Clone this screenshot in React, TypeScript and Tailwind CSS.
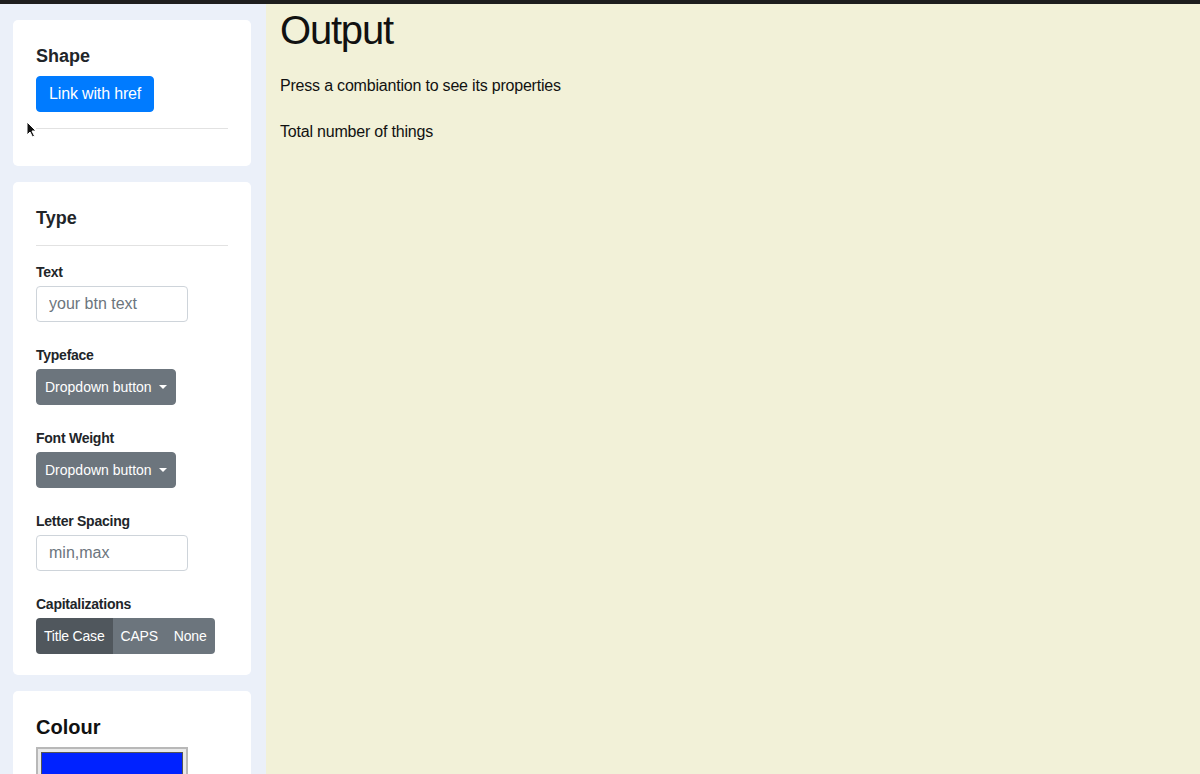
import React from "react";

const font = { fontFamily: '"Liberation Sans", Arial, sans-serif' };

const Label: React.FC<{ children: React.ReactNode }> = ({ children }) => (
  <div className="text-[14px] font-bold leading-[21px] tracking-[-0.25px] text-[#212529] mb-[3px]">{children}</div>
);

const TextBox: React.FC<{ placeholder: string }> = ({ placeholder }) => (
  <input
    className="block w-[152px] h-[36px] px-3 rounded border border-[#ced4da] bg-white text-[16px] text-[#495057] placeholder:text-[#6c757d] outline-none"
    placeholder={placeholder}
  />
);

const Dropdown: React.FC = () => (
  <button className="flex items-center h-[36px] px-2 rounded bg-[#6c757d] border border-[#6c757d] text-white text-[14px]">
    Dropdown button
    <span className="ml-[7px] inline-block w-0 h-0 border-l-[4px] border-r-[4px] border-t-[4px] border-l-transparent border-r-transparent border-t-white" />
  </button>
);

const App: React.FC = () => {
  return (
    <div className="h-screen w-full overflow-hidden flex flex-col" style={font}>
      <div className="h-[4px] bg-[#1e1e1e] shrink-0" />
      <div className="flex flex-1 min-h-0">
        {/* sidebar */}
        <aside className="relative w-[266px] shrink-0 bg-[#ebf0f9] pl-[13px] pr-[15px] pt-4 flex flex-col gap-4">
          <section className="bg-white rounded-[5px] px-[23px] pt-6 pb-[23px]">
            <h2 className="text-[18px] font-bold leading-6 text-[#212529] mb-2">Shape</h2>
            <button className="h-[36px] px-3 rounded bg-[#007bff] border border-[#007bff] text-white text-[16px] tracking-[-0.15px]">
              Link with href
            </button>
            <hr className="mt-4 mb-[14px] border-0 border-t border-[#e2e2e2] w-full" />
            <svg
              className="absolute left-[26px] top-[117px]"
              width="11"
              height="17"
              viewBox="0 0 11 17"
            >
              <path d="M1 1 L1 14 L4 11 L6.5 16 L8.5 15 L6 10 L10 10 Z" fill="#111" stroke="#fff" strokeWidth="1" />
            </svg>
          </section>

          <section className="bg-white rounded-[5px] px-[23px] pt-6 pb-[21px]">
            <h2 className="text-[18px] font-bold leading-6 text-[#212529]">Type</h2>
            <hr className="mt-[15px] mb-4 border-0 border-t border-[#e2e2e2]" />
            <div className="flex flex-col gap-[23px]">
              <div>
                <Label>Text</Label>
                <TextBox placeholder="your btn text" />
              </div>
              <div>
                <Label>Typeface</Label>
                <Dropdown />
              </div>
              <div>
                <Label>Font Weight</Label>
                <Dropdown />
              </div>
              <div>
                <Label>Letter Spacing</Label>
                <TextBox placeholder="min,max" />
              </div>
              <div>
                <Label>Capitalizations</Label>
                <div className="inline-flex h-[36px] rounded overflow-hidden text-white text-[14px] tracking-[-0.2px]">
                  <button className="px-2 bg-[#50575d]">Title Case</button>
                  <button className="px-2 bg-[#6c757d]">CAPS</button>
                  <button className="px-2 bg-[#6c757d]">None</button>
                </div>
              </div>
            </div>
          </section>

          <section className="bg-white rounded-[5px] px-[23px] pt-6">
            <h2 className="text-[20px] font-bold leading-6 text-[#111] mb-[8px]">Colour</h2>
            <div className="w-[152px] h-[40px] border-2 border-[#b8b8b8] bg-[#e9e9e9] p-[3px]">
              <div className="w-full h-full bg-[#0022ff] border border-[#555]" />
            </div>
          </section>
        </aside>

        {/* output */}
        <main className="flex-1 bg-[#f2f1d8] pl-[14px] text-[#111]">
          <h1 className="text-[40px] leading-[48px] tracking-[-1.2px] mt-[2px]">Output</h1>
          <p className="mt-[20px] text-[16px] leading-6 tracking-[-0.2px]">Press a combiantion to see its properties</p>
          <p className="mt-[22px] text-[16px] leading-6 tracking-[-0.2px]">Total number of things</p>
        </main>
      </div>
    </div>
  );
};

export default App;
